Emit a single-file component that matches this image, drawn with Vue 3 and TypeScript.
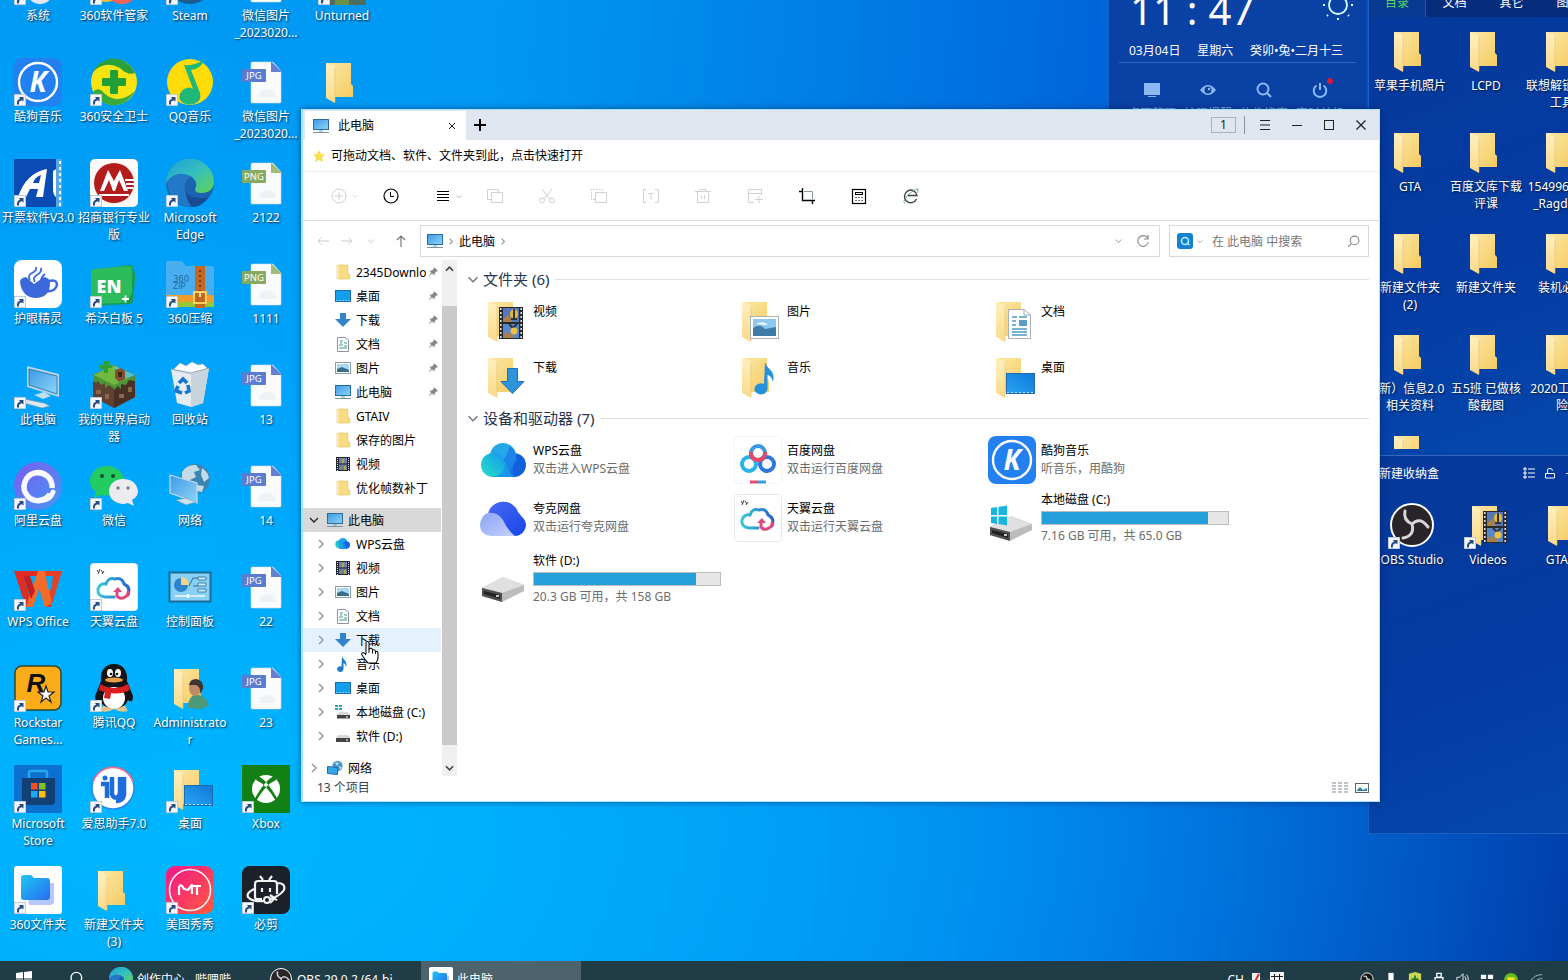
<script setup lang="ts">
import { ref } from 'vue'

interface DeskItem {
  icon: string
  lines: string[]
  shortcut?: boolean
}
interface TreeItem {
  icon: string
  label: string
  pinned?: boolean
  expandable?: boolean
  hovered?: boolean
}
interface Tile {
  icon: string
  title: string
  sub?: string
  used?: number
}

const d = (icon: string, lines: string, shortcut = false): DeskItem => ({
  icon,
  lines: lines.split('|'),
  shortcut,
})

const deskColumns: DeskItem[][] = [
  [
    d('system', '系统', true),
    d('kugou', '酷狗音乐', true),
    d('invoice', '开票软件V3.0', true),
    d('cup', '护眼精灵', true),
    d('thispc', '此电脑', true),
    d('aliyun', '阿里云盘', true),
    d('wps', 'WPS Office', true),
    d('rockstar', 'Rockstar|Games...', true),
    d('store', 'Microsoft|Store', true),
    d('folder360', '360文件夹', true),
  ],
  [
    d('soft360', '360软件管家', true),
    d('safe360', '360安全卫士', true),
    d('cmb', '招商银行专业|版', true),
    d('seewo', '希沃白板 5', true),
    d('minecraft', '我的世界启动|器', true),
    d('wechat', '微信', true),
    d('tianyi', '天翼云盘', true),
    d('qq', '腾讯QQ', true),
    d('aisi', '爱思助手7.0', true),
    d('folder', '新建文件夹|(3)'),
  ],
  [
    d('steam', 'Steam', true),
    d('qqmusic', 'QQ音乐', true),
    d('edge', 'Microsoft|Edge', true),
    d('zip360', '360压缩', true),
    d('recycle', '回收站'),
    d('network', '网络'),
    d('control', '控制面板'),
    d('admin', 'Administrato|r'),
    d('folder-desktop', '桌面', true),
    d('meitu', '美图秀秀', true),
  ],
  [
    d('jpg', '微信图片|_2023020...'),
    d('jpg', '微信图片|_2023020...'),
    d('png', '2122'),
    d('png', '1111'),
    d('jpg', '13'),
    d('jpg', '14'),
    d('jpg', '22'),
    d('jpg', '23'),
    d('xbox', 'Xbox', true),
    d('bijian', '必剪', true),
  ],
  [d('unturned', 'Unturned', true), d('folder', '')],
]

const boxFolders: DeskItem[] = [
  d('folder', '苹果手机照片'),
  d('folder', 'LCPD'),
  d('folder', '联想解锁刷机|工具'),
  d('folder', 'GTA'),
  d('folder', '百度文库下载|评课'),
  d('folder', '1549966012|_Ragdoll...'),
  d('folder', '新建文件夹|(2)'),
  d('folder', '新建文件夹'),
  d('folder', '装机必备'),
  d('folder', '(新）信息2.0|相关资料'),
  d('folder', '五5班 已做核|酸截图'),
  d('folder', '2020工伤保|险'),
  d('folder', ''),
]
const boxApps: DeskItem[] = [
  d('obs', 'OBS Studio', true),
  d('folder-video', 'Videos', true),
  d('folder', 'GTA IV'),
]

const quick: TreeItem[] = [
  { icon: 's-folder', label: '2345Downloads', pinned: true },
  { icon: 's-desktop', label: '桌面', pinned: true },
  { icon: 's-down', label: '下载', pinned: true },
  { icon: 's-doc', label: '文档', pinned: true },
  { icon: 's-pic', label: '图片', pinned: true },
  { icon: 's-pc', label: '此电脑', pinned: true },
  { icon: 's-folder', label: 'GTAIV' },
  { icon: 's-folder', label: '保存的图片' },
  { icon: 's-video', label: '视频' },
  { icon: 's-folder', label: '优化帧数补丁' },
]
const pcChildren: TreeItem[] = [
  { icon: 's-wps', label: 'WPS云盘' },
  { icon: 's-video', label: '视频' },
  { icon: 's-pic', label: '图片' },
  { icon: 's-doc', label: '文档' },
  { icon: 's-down', label: '下载', hovered: true },
  { icon: 's-music', label: '音乐' },
  { icon: 's-desktop', label: '桌面' },
  { icon: 's-diskc', label: '本地磁盘 (C:)' },
  { icon: 's-diskd', label: '软件 (D:)' },
]

const folders: Tile[] = [
  { icon: 'folder-video', title: '视频' },
  { icon: 'folder-pic', title: '图片' },
  { icon: 'folder-doc', title: '文档' },
  { icon: 'folder-down', title: '下载' },
  { icon: 'folder-music', title: '音乐' },
  { icon: 'folder-desktop', title: '桌面' },
]
const devices: Tile[] = [
  { icon: 'wpscloud', title: 'WPS云盘', sub: '双击进入WPS云盘' },
  { icon: 'baidu', title: '百度网盘', sub: '双击运行百度网盘' },
  { icon: 'kugou', title: '酷狗音乐', sub: '听音乐，用酷狗' },
  { icon: 'quark', title: '夸克网盘', sub: '双击运行夸克网盘' },
  { icon: 'tianyi', title: '天翼云盘', sub: '双击运行天翼云盘' },
  { icon: 'disk-c', title: '本地磁盘 (C:)', sub: '7.16 GB 可用，共 65.0 GB', used: 89 },
  { icon: 'disk-d', title: '软件 (D:)', sub: '20.3 GB 可用，共 158 GB', used: 87 },
]

const tools = [
  { icon: 't-new', name: '新建', off: true, more: true },
  { icon: 't-clock', name: '历史' },
  { icon: 't-list', name: '排列', more: true },
  { icon: 't-copy', name: '复制', off: true },
  { icon: 't-cut', name: '剪切', off: true },
  { icon: 't-paste', name: '粘贴', off: true },
  { icon: 't-rename', name: '重命名', off: true },
  { icon: 't-trash', name: '删除', off: true },
  { icon: 't-add', name: '添加', off: true },
  { icon: 't-crop', name: '截图' },
  { icon: 't-calc', name: '计算器' },
  { icon: 't-ie', name: '浏览器' },
]

const widgets = [
  { icon: 'w-screen', label: '桌面整理' },
  { icon: 'w-eye', label: '护眼提醒' },
  { icon: 'w-search', label: '软件搜索' },
  { icon: 'w-power', label: '定时关机' },
]
const boxTabs = ['目录', '文档', '其它', '图片']
const activeTab = ref('目录')
const keyword = ref('')
const tray = ['y-pen', 'y-grid', 'y-obs', 'y-usb', 'y-shield', 'y-lock', 'y-sound', 'y-win', 'y-green', 'y-wifi']
</script>

<template>
  <svg class="sprite" aria-hidden="true">
    <defs>
      <linearGradient id="gFolder" x1="0" y1="0" x2="1" y2="1"><stop offset="0" stop-color="#fce8a6" /><stop offset="1" stop-color="#f5cb62" /></linearGradient>
      <linearGradient id="gFlap" x1="0" y1="0" x2="0" y2="1"><stop offset="0" stop-color="#fff0c0" /><stop offset="1" stop-color="#fad98a" /></linearGradient>
      <linearGradient id="gScreen" x1="0" y1="0" x2="1" y2="1"><stop offset="0" stop-color="#3c9ae4" /><stop offset="1" stop-color="#8fd4fa" /></linearGradient>
      <linearGradient id="gDesk" x1="0" y1="1" x2="1" y2="0"><stop offset="0" stop-color="#28a6f4" /><stop offset="1" stop-color="#1077d8" /></linearGradient>
      <linearGradient id="gEdge" x1="0" y1="0" x2="1" y2="1"><stop offset="0" stop-color="#1d9fd8" /><stop offset=".5" stop-color="#35bfc0" /><stop offset="1" stop-color="#62d44e" /></linearGradient>
      <linearGradient id="gMeitu" x1="0" y1="0" x2="1" y2="1"><stop offset="0" stop-color="#f5168c" /><stop offset="1" stop-color="#ff5c3c" /></linearGradient>
      <linearGradient id="gAli" x1="0" y1="0" x2="1" y2="1"><stop offset="0" stop-color="#7c5cf0" /><stop offset="1" stop-color="#4598f2" /></linearGradient>
      <linearGradient id="gWps" x1="0" y1="1" x2="1" y2="0"><stop offset="0" stop-color="#26e0c4" /><stop offset="1" stop-color="#1298f0" /></linearGradient>
      <linearGradient id="gQuark" x1="0" y1="0" x2="1" y2="1"><stop offset="0" stop-color="#4a68f4" /><stop offset="1" stop-color="#1546e8" /></linearGradient>
      <linearGradient id="gQuark2" x1="0" y1="0" x2="1" y2="1"><stop offset="0" stop-color="#8ca4f8" /><stop offset="1" stop-color="#c4d0fc" /></linearGradient>
      <linearGradient id="gTy" x1="0" y1="0" x2="1" y2="0"><stop offset="0" stop-color="#38c8d8" /><stop offset="1" stop-color="#2a66c8" /></linearGradient>
      <linearGradient id="gF360" x1="0" y1="0" x2="1" y2="1"><stop offset="0" stop-color="#1cc8f0" /><stop offset="1" stop-color="#2a6cf4" /></linearGradient>

      <symbol id="arrow" viewBox="0 0 12 12"><rect width="12" height="12" fill="#f4f8fc" stroke="#8aa4bc" stroke-width="1" /><path d="M3 10.500C2.500 7 4 5 6.200 4.700L5 3H9.500V7.600L8 6.300C5.500 6.500 4.500 8 5 10.500Z" fill="#274a80" /></symbol>

      <symbol id="folder" viewBox="0 0 48 48"><path d="M8 5H33V26L35 28V39H14Z" fill="url(#gFolder)" /><path d="M8 5L16 8Q17 9 17 11V45L8 40Z" fill="url(#gFlap)" /><path d="M17 10V44" stroke="#e8c060" stroke-width=".6" /></symbol>
      <symbol id="filmstrip" viewBox="0 0 24 32"><rect width="24" height="32" fill="#26282e" /><rect x="4" y="1" width="16" height="14" fill="#5478b8" /><rect x="4" y="17" width="16" height="14" fill="#5888c8" /><path d="M4 12L9 8 13 12V15H4ZM4 28L8 25 14 28V31H4Z" fill="#a8804c" /><ellipse cx="15" cy="7" rx="4" ry="5" fill="#e8b830" /><path d="M15 2V12M12 12H18M10 17L14 21 18 17" stroke="#30343c" stroke-width="2" fill="none" /><circle cx="15" cy="24" r="3.500" fill="#f0c040" /><path d="M1.800 1V32M22.200 1V32" stroke="#d8dce4" stroke-width="1.600" stroke-dasharray="2 2" /></symbol>
      <symbol id="folder-video" viewBox="0 0 48 48"><use href="#folder" width="48" height="48" /><use href="#filmstrip" x="19" y="10" width="24" height="32" /></symbol>
      <symbol id="folder-pic" viewBox="0 0 48 48"><use href="#folder" width="48" height="48" /><rect x="16.500" y="19.500" width="28" height="22" fill="#fff" stroke="#a8b4bc" /><rect x="19" y="22" width="23" height="17" fill="#8cc8f0" /><path d="M19 31Q26 26 31 32L42 30V39H19Z" fill="#3d7ca8" /><path d="M22 27Q28 23 34 28Z" fill="#fff" /></symbol>
      <symbol id="folder-doc" viewBox="0 0 48 48"><use href="#folder" width="48" height="48" /><path d="M20.500 12.500H36L42.500 18V41.500H20.500Z" fill="#fff" stroke="#a8aeb4" /><path d="M36 12.500V18H42.500" fill="none" stroke="#a8aeb4" /><path d="M24 20H29M24 24H28M24 28H28M24 32H39M24 35H39M24 38H39M31 20H39" stroke="#4d98c4" stroke-width="1.400" /><rect x="31" y="23" width="8" height="6" fill="#5c9cc8" /></symbol>
      <symbol id="folder-down" viewBox="0 0 48 48"><use href="#folder" width="48" height="48" /><path d="M27.500 15.500H37.500V28.500H44L32.500 40.500 21 28.500H27.500Z" fill="#2f94dc" stroke="#1c72b8" /></symbol>
      <symbol id="folder-music" viewBox="0 0 48 48"><use href="#folder" width="48" height="48" /><path d="M31 9C33 17 42 17 39 29 38 24 35 22 33.500 22V36A6.500 5.500 0 1 1 30 31Z" fill="#2590dc" /></symbol>
      <symbol id="folder-desktop" viewBox="0 0 48 48"><use href="#folder" width="48" height="48" /><rect x="18.500" y="20.500" width="28" height="20" fill="url(#gDesk)" stroke="#1d6cae" /><path d="M19 39.500H46" stroke="#a8dcff" stroke-dasharray="2 2" /></symbol>
      <symbol id="admin" viewBox="0 0 48 48"><use href="#folder" width="48" height="48" /><path d="M21 43Q24 31 30 30 40 32 43 41Q34 48 21 43Z" fill="#4c9a7a" /><ellipse cx="29" cy="24" rx="6" ry="8" fill="#c08c68" /><path d="M23 21Q24 15 30 15 38 16 37 25L34 30Q35 23 30 21Z" fill="#3c3630" /></symbol>

      <symbol id="file" viewBox="0 0 48 48"><path d="M10 4Q9 4 9 6V44Q9 45 10 45H38Q39 45 39 44V13L31 4Z" fill="#fafbfd" stroke="#d4d8e4" stroke-width=".6" /><path d="M17 38Q17 32 23 32 28 28 32 34 35 36 33 39H18Z" fill="#eef1f6" /></symbol>
      <symbol id="jpg" viewBox="0 0 48 48"><use href="#file" width="48" height="48" /><path d="M29 3L40 14H29Z" fill="#6480d0" /><rect y="11" width="24" height="13" rx="1" fill="#5c7cd0" /><text x="12" y="21" text-anchor="middle" font-size="9.500" font-family="Noto Sans, sans-serif" fill="#fff">JPG</text></symbol>
      <symbol id="png" viewBox="0 0 48 48"><use href="#file" width="48" height="48" /><path d="M29 3L40 14H29Z" fill="#a0bc78" /><rect y="11" width="24" height="13" rx="1" fill="#88aa60" /><text x="12" y="21" text-anchor="middle" font-size="9.500" font-family="Noto Sans, sans-serif" fill="#fff">PNG</text></symbol>

      <symbol id="system" viewBox="0 0 48 48"><circle cx="26" cy="34" r="13" fill="#e4e8ec" /><circle cx="26" cy="34" r="6" fill="#88a4bc" /></symbol>
      <symbol id="soft360" viewBox="0 0 48 48"><circle cx="16" cy="30" r="15" fill="#fcc030" /><circle cx="32" cy="30" r="17" fill="#f8605c" /></symbol>
      <symbol id="steam" viewBox="0 0 48 48"><circle cx="24" cy="24" r="23" fill="#1a5c90" /></symbol>
      <symbol id="unturned" viewBox="0 0 48 48"><rect width="48" height="48" fill="#4c6c64" /><rect x="17" y="42" width="14" height="6" fill="#6c9048" /></symbol>

      <symbol id="kugou" viewBox="0 0 48 48"><rect width="48" height="48" rx="8" fill="#2380f0" /><circle cx="24" cy="24" r="19" fill="none" stroke="#fff" stroke-width="2.400" /><text x="24" y="34" text-anchor="middle" font-size="28" font-weight="700" font-style="italic" font-family="Noto Sans, sans-serif" fill="#fff">K</text></symbol>
      <symbol id="safe360" viewBox="0 0 48 48"><circle cx="24" cy="24" r="23" fill="#f8e410" /><path d="M3 14A23 23 0 0 1 45 15Q38 18 30 10 15 2 3 14Z" fill="#28a03c" /><path d="M3 34Q8 28 14 35 28 48 45 33 36 49 20 47 8 44 3 34Z" fill="#3caa38" /><path d="M21 13H27V21H35V27H27V35H21V27H13V21H21Z" fill="#22a038" stroke="#22a038" stroke-linejoin="round" stroke-width="2" /></symbol>
      <symbol id="qqmusic" viewBox="0 0 48 48"><circle cx="24" cy="24" r="23" fill="#ffdc08" /><path d="M18 7Q30 8 38 1 37 10 25 12L34 35Q36 43 28 46 19 48 14 42 12 35 18 31 24 28 27 31Z" fill="#20b878" /></symbol>
      <symbol id="invoice" viewBox="0 0 48 48"><rect width="48" height="48" fill="#0b4cb4" /><path d="M42 0H48V48H42Z" fill="#58a8e4" /><path d="M39 12Q42 10 42 10V38Q39 36 39 30Z" fill="#fff" /><path d="M46 2V48" stroke="#fff" stroke-width="2" stroke-dasharray="3 3" /><path d="M4 38Q12 14 33 10L29 38H22L24 30H16L12 38ZM19 24H25L27 16Q21 18 19 24Z" fill="#fff" fill-rule="evenodd" /></symbol>
      <symbol id="cmb" viewBox="0 0 48 48"><rect width="48" height="48" rx="5" fill="#fdf9f6" /><circle cx="24" cy="24" r="20" fill="#b41c1c" /><path d="M10 32L18 11 24 22 30 11 38 32H34L29 21 25 32H23L19 21 14 32Z" fill="#fff" /><path d="M9 36H39M35 21H44M36 25H44M37 29H43" stroke="#fff" stroke-width="2" /></symbol>
      <symbol id="edge" viewBox="0 0 48 48"><circle cx="24" cy="24" r="24" fill="#1b62b0" /><path d="M0 24A24 24 0 0 1 48 23Q47 34 35 34 29 34 29 30 32 25 28 20 18 10 0 24Z" fill="url(#gEdge)" /><path d="M1 22Q12 10 25 18 17 22 19 32 21 42 31 47 4 50 1 22Z" fill="#2478c8" /><path d="M20 33Q27 42 42 38 36 48 26 48 20 42 20 33Z" fill="#174c94" /></symbol>
      <symbol id="cup" viewBox="0 0 48 48"><rect width="48" height="48" rx="8" fill="#fff" /><path d="M6 22Q6 18 12 17L20 24 30 17Q36 18 36 23 36 38 21 38 8 37 6 22Z" fill="#3c68dc" /><path d="M35 21Q43 19 43 25 41 32 33 31" fill="none" stroke="#3c68dc" stroke-width="2.500" /><path d="M16 20Q13 16 18 13 23 11 22 7M21 22Q18 18 23 15 28 12 27 8M27 21Q27 17 31 14" fill="none" stroke="#3c68dc" stroke-width="1.800" /></symbol>
      <symbol id="seewo" viewBox="0 0 48 48"><path d="M2 10L40 5Q43 5 43 8L45 14Q46 17 45 20L43 40Q43 44 39 44L4 46Z" fill="#189c50" /><path d="M1 12Q1 9 4 9L39 6Q42 6 42 9V32Q39 42 30 43L4 44Q1 44 1 41Z" fill="#2cbc5c" /><text x="19" y="33" text-anchor="middle" font-size="18" font-weight="800" font-family="Open Sans, Noto Sans, sans-serif" fill="#fff">EN</text><path d="M32 39H39M35.500 35.500V42.500" stroke="#fff" stroke-width="1.800" /></symbol>
      <symbol id="zip360" viewBox="0 0 48 48"><path d="M0 3Q0 1 2 1H16L20 6H46Q48 6 48 8V36H0Z" fill="#48aef0" /><rect x="12" y="35" width="36" height="12" fill="#98c838" /><rect y="35" width="48" height="7" fill="#f09c28" /><rect x="29" y="6" width="10" height="42" fill="#c46820" /><path d="M34 10V32" stroke="#7c3810" stroke-width="2" stroke-dasharray="2 3" /><rect x="28" y="32" width="12" height="11" fill="none" stroke="#ffd060" stroke-width="2" /><path d="M34 31V37" stroke="#ffe090" stroke-width="2" /><text x="15" y="22" text-anchor="middle" font-size="8.500" font-family="DejaVu Sans, sans-serif" fill="#1d68a8">360</text><text x="13" y="29" text-anchor="middle" font-size="8" font-family="DejaVu Sans, sans-serif" fill="#1d68a8">ZIP</text></symbol>
      <symbol id="thispc" viewBox="0 0 48 48"><path d="M13 5L45 13V36L13 26Z" fill="#b8d4e8" /><path d="M15 8L43 15V33L15 24Z" fill="url(#gScreen)" stroke="#1c6ca8" stroke-width=".8" /><path d="M20 34L30 31 37 35 29 38Z" fill="#c4dcec" /><path d="M10 38L30 42 36 45 28 47 6 41Z" fill="#dce8f0" stroke="#7898b0" stroke-width=".7" /></symbol>
      <symbol id="minecraft" viewBox="0 0 48 48"><path d="M3 14L24 4 45 14V36L24 47 3 36Z" fill="#604030" /><path d="M24 24L45 14V36L24 47Z" fill="#483024" /><path d="M3 14L24 4 45 14 24 25Z" fill="#70b840" /><path d="M24 5L45 14 38 17 26 11Z" fill="#58c0d0" /><path d="M3 14V20L7 22V19L11 24 15 22V27L19 24 24 28V24ZM24 24V29L28 25 31 28V23L36 24 39 19 45 20V14Z" fill="#4e9438" /><path d="M25 9L31 7 35 10V18L29 21 25 17Z" fill="#805030" /><rect x="28" y="11" width="4" height="5" fill="#442418" /><path d="M14 0H19V4H22V7H18V12H14V8H10V4H14Z" fill="#2ca030" /><path d="M6 29H11V33H6ZM15 33H19V38H15ZM29 33H34V37H29ZM38 26H42V31H38Z" fill="#88684c" /></symbol>
      <symbol id="recycle" viewBox="0 0 48 48"><path d="M5 8L43 7 37 42 25 46 11 42Z" fill="#e4ecf2" /><path d="M25 11L43 7 37 42 25 46Z" fill="#c8d4dc" /><path d="M7 9L14 2 20 5 26 1 32 4 37 3 42 8 25 13Z" fill="#fcfdfe" stroke="#b8c4cc" stroke-width=".6" /><path d="M5 8L25 12 43 7" fill="none" stroke="#8ca4b4" /><path d="M13 22L17 18 21 22M22 24L23 30 19 32M16 32L10 30 12 25" fill="none" stroke="#1676d0" stroke-width="3.600" /></symbol>
      <symbol id="aliyun" viewBox="0 0 48 48"><circle cx="24" cy="24" r="24" fill="url(#gAli)" /><path d="M36 32A14 14 0 1 1 38 26" fill="none" stroke="#f8faff" stroke-width="5.500" /><path d="M26 38Q36 39 39 30" fill="none" stroke="#f8faff" stroke-width="5" stroke-linecap="round" /></symbol>
      <symbol id="wechat" viewBox="0 0 48 48"><path d="M17 4C8 4 0 10 0 19 0 24 3 28 6 30L4 36 11 33Q15 34 20 33 35 30 34 18 32 5 17 4Z" fill="#22cc60" /><path d="M33 17C25 17 19 22 19 29.500S26 42 34 42L38 41 44 44 42 38Q48 35 48 29 46 17 33 17Z" fill="#ececf0" /><circle cx="12" cy="14" r="2" fill="#14502c" /><circle cx="23" cy="14" r="2" fill="#14502c" /><circle cx="28" cy="26" r="1.800" fill="#808488" /><circle cx="38" cy="26" r="1.800" fill="#808488" /></symbol>
      <symbol id="network" viewBox="0 0 48 48"><circle cx="29" cy="17" r="15" fill="#3c84b4" /><path d="M16 10Q21 2 30 3L34 8 28 10 30 15 22 19 16 16ZM36 6Q42 10 43 16L38 20 35 13ZM30 23L38 24 36 30 31 29Z" fill="#c4dce8" /><path d="M4 13L31 21V41L4 31Z" fill="url(#gScreen)" stroke="#c0dcec" stroke-width="1.200" /><path d="M10 38L20 36 30 40 20 43Z" fill="#ccdfec" stroke="#6c94b0" stroke-width=".6" /></symbol>
      <symbol id="wps" viewBox="0 0 48 48"><path d="M0 8H26V13H9L19 44H12Z" fill="#e02c24" /><path d="M30 8H48L37 44H31L38 22 39 13H32Z" fill="#e84024" /><path d="M24 8H31L33 20 38 40 31 44 25 26 19 44H12L15 34Z" fill="#f46c2c" /><path d="M9 13H16L21 28 17 36Z" fill="#c42020" /></symbol>
      <symbol id="tianyi" viewBox="0 0 48 48"><rect x=".5" y=".5" width="47" height="47" rx="3" fill="#fff" stroke="#e4e8ee" /><path d="M24 34H15Q7 33 8 26 10 20 16 21 18 14 25 16 32 14 34 21 41 24 38 32" fill="none" stroke="url(#gTy)" stroke-width="3" stroke-linecap="round" /><path d="M27 28V33Q30 37 35 34 39 32 38 28" fill="none" stroke="#e0487c" stroke-width="3" /><path d="M23 29L28 24 32 29Z" fill="#e0487c" /><path d="M7 7L9 10M10 6L8 11M11 7L13 10M12 11L14 8" stroke="#444" /></symbol>
      <symbol id="control" viewBox="0 0 48 48"><rect x="3.500" y="9.500" width="41" height="29" fill="#88d0f4" stroke="#1c6c98" stroke-width="2" /><circle cx="15" cy="22" r="7" fill="#2c84cc" /><path d="M15 22V14A8 8 0 0 1 23 22Z" fill="#f4d488" /><path d="M23 23L27 15H32M27 23H32" fill="none" stroke="#286c94" /><path d="M32 14H40V17H32ZM32 20H40V23H32ZM32 26H40V29H32Z" fill="#c8ecfc" stroke="#286c94" stroke-width=".8" /><path d="M9 33H20M25 33H39" stroke="#f4f8fa" stroke-width="1.500" /><circle cx="22" cy="33" r="2" fill="#fff" /></symbol>
      <symbol id="rockstar" viewBox="0 0 48 48"><rect x="1" y="2" width="46" height="44" rx="7" fill="#fcac18" stroke="#30482c" stroke-width="1.500" /><text x="22" y="28" text-anchor="middle" font-size="26" font-weight="900" font-style="italic" font-family="Liberation Sans, Noto Sans, sans-serif" fill="#111">R</text><path d="M32 22L34 28H40L35 32 37 38 32 34 27 38 29 32 24 28H30Z" fill="#fff" stroke="#222" stroke-width="1.200" /></symbol>
      <symbol id="qq" viewBox="0 0 48 48"><path d="M13 42H35L38 47Q30 49 24 45 18 49 10 47Z" fill="#e0c48c" /><path d="M24 0C14 0 10 8 11 17L5 32Q5 40 10 36 13 44 24 45 35 44 38 36 43 40 43 32L37 17C38 8 34 0 24 0Z" fill="#141418" /><ellipse cx="24" cy="34" rx="11" ry="11" fill="#fff" /><ellipse cx="20" cy="9" rx="3" ry="4" fill="#fff" /><ellipse cx="28" cy="9" rx="3" ry="4" fill="#fff" /><circle cx="21" cy="10" r="1.300" fill="#111" /><circle cx="27" cy="10" r="1.300" fill="#111" /><ellipse cx="24" cy="16" rx="9" ry="2.500" fill="#e8a048" /><path d="M10 20Q24 28 38 20L40 26Q30 31 21 29L20 35 14 34 15 28 9 26Z" fill="#dc2020" /></symbol>
      <symbol id="store" viewBox="0 0 48 48"><rect width="48" height="48" fill="#0c70d0" /><path d="M15 13V8Q15 6 17 6H31Q33 6 33 8V13" fill="none" stroke="#28a8ec" stroke-width="2.500" /><path d="M8 13H41V36Q41 40 37 40H12Q8 40 8 36Z" fill="#124074" /><rect x="17" y="18" width="6.500" height="6.500" fill="#f05024" /><rect x="25" y="18" width="6.500" height="6.500" fill="#80c020" /><rect x="17" y="26" width="6.500" height="6.500" fill="#20a8f0" /><rect x="25" y="26" width="6.500" height="6.500" fill="#fcbc10" /></symbol>
      <symbol id="aisi" viewBox="0 0 48 48"><circle cx="23" cy="23" r="21" fill="#fff" stroke="#2c88e8" stroke-width="1.500" /><path d="M3 17A21 21 0 0 1 43 17" fill="none" stroke="#e87090" stroke-width="1.600" /><circle cx="15" cy="13" r="2.500" fill="#1c6cdc" /><path d="M11 19H17V33M22 12V29Q23 34 28 32 30 30 30 27V12M34 12V30Q33 36 26 36" fill="none" stroke="#1c6cdc" stroke-width="4.500" /></symbol>
      <symbol id="xbox" viewBox="0 0 48 48"><rect width="48" height="48" fill="#128014" /><circle cx="24" cy="24" r="14" fill="#fff" /><path d="M15 11Q24 13 36 35 37 37 34 36 24 19 14 15ZM33 11Q24 13 12 35 11 37 14 36 24 19 34 15Z" fill="#128014" /></symbol>
      <symbol id="folder360" viewBox="0 0 48 48"><rect width="48" height="48" rx="3" fill="#fff" /><path d="M12 17H40V36Q40 39 36 39H15Z" fill="#b8c8fc" /><path d="M7 12Q7 9 10 9H17L20 12H33Q36 12 36 15V31Q36 34 33 34H10Q7 34 7 31Z" fill="url(#gF360)" /></symbol>
      <symbol id="meitu" viewBox="0 0 48 48"><rect width="48" height="48" rx="9" fill="url(#gMeitu)" /><circle cx="24" cy="24" r="20.500" fill="none" stroke="#fff" stroke-width="1.500" /><path d="M13 29V21Q15 17 18 23L22 24 26 19V28M26 20H35M31 20V29" fill="none" stroke="#fff" stroke-width="2.200" stroke-linejoin="round" /></symbol>
      <symbol id="bijian" viewBox="0 0 48 48"><rect width="48" height="48" rx="8" fill="#1c2028" /><path d="M20 33H15Q13 33 13 31V18Q13 15 16 15H32Q35 15 35 18V28M18 10L21 14M30 10L27 14M20 22V26M28 22V26M35 17Q44 17 42 24 38 30 28 33M12 23Q4 27 6 31 10 36 22 35M28 29L35 34M28 37L34 31" fill="none" stroke="#f0f2f4" stroke-width="2.200" /><circle cx="25" cy="34" r="3" fill="#1c2028" stroke="#f0f2f4" stroke-width="2" /></symbol>
      <symbol id="obs" viewBox="0 0 48 48"><circle cx="24" cy="24" r="21" fill="#282428" stroke="#fff" stroke-width="2" /><path d="M24 23Q15 19 17 10M24 23Q32 15 40 26M24 23Q27 35 15 37" fill="none" stroke="#d8d4d8" stroke-width="3" stroke-linecap="round" /></symbol>

      <symbol id="cloudshape" viewBox="0 0 48 40"><circle cx="24" cy="15" r="13" fill="#20a0e8" /><circle cx="34" cy="23" r="11" fill="#1068e0" /><path d="M12 34H36L30 20 15 10Z" fill="#1478e8" /><circle cx="13" cy="21" r="12" fill="url(#gWps)" /><path d="M12 9Q20 10 24 18 28 30 34 34H12Z" fill="#1c98e8" opacity=".7" /></symbol>
      <symbol id="wpscloud" viewBox="0 0 48 48"><circle cx="34" cy="29" r="12" fill="#1060dc" /><circle cx="23" cy="20" r="13" fill="#26a8e8" /><path d="M14 41H34L33 28 24 22Z" fill="#1470e4" /><path d="M30 10Q37 15 36 24L30 36 22 30Z" fill="#1a84e8" /><circle cx="13" cy="29" r="12" fill="url(#gWps)" /><path d="M13 17Q22 18 25 26 28 36 34 41H13Q24 38 25 29 20 20 10 17Z" fill="#1ca0e8" opacity=".8" /></symbol>
      <symbol id="quark" viewBox="0 0 48 48"><path d="M8 20A15.500 15 0 0 1 38 18Q41 22 44 25 48 31 44 37 41 42 34 42H26L8 28Z" fill="url(#gQuark)" /><path d="M8 19Q17 17 23 26 28 37 35 42H11Q0 41 0 31 1 21 8 19Z" fill="url(#gQuark2)" /></symbol>
      <symbol id="baidu" viewBox="0 0 48 48"><rect x=".5" y=".5" width="47" height="47" rx="3" fill="#fff" stroke="#f4f4f6" /><circle cx="15" cy="28" r="7" fill="none" stroke="#28b4e8" stroke-width="4" /><circle cx="33" cy="28" r="7" fill="none" stroke="#2c78dc" stroke-width="4" /><circle cx="24" cy="17" r="7" fill="none" stroke="#3898e0" stroke-width="4" /><path d="M17 16V18Q18 24 24 24 30 24 31 18V16" fill="none" stroke="#e84868" stroke-width="4" /><path d="M16 46H24" stroke="#e84868" stroke-width="3" /><path d="M24 46H32" stroke="#38a0e0" stroke-width="3" /></symbol>
      <symbol id="disk-d" viewBox="0 0 48 48"><path d="M2 33L23 22 44 30V36L22 47 2 41Z" fill="#bcbcbc" /><path d="M2 33L23 22 44 30 22 38Z" fill="#e0e0e0" /><path d="M2 33L22 38V47L2 41Z" fill="#505050" /><path d="M4 36L20 40V44L4 39Z" fill="#222" /><path d="M16 41H19" stroke="#fff" stroke-width="1.500" /></symbol>
      <symbol id="disk-c" viewBox="0 0 48 48"><use href="#disk-d" width="48" height="48" /><path d="M3 14L9 13V21H3ZM10.500 13L19 11.500V21H10.500ZM3 22.500H9V30L3 29ZM10.500 22.500H19V31.500L10.500 30Z" fill="#16b4e0" /></symbol>

      <symbol id="s-folder" viewBox="0 0 16 16"><path d="M2 1H13V10H15V15H2Z" fill="#f8dc84" stroke="#e4c060" stroke-width=".6" /><path d="M3 1V15" stroke="#fff0b8" stroke-width="1.500" /></symbol>
      <symbol id="s-desktop" viewBox="0 0 16 16"><rect x=".5" y="2.500" width="15" height="11" fill="#12a0ec" stroke="#1c6ca8" /><path d="M1 12.500H15" stroke="#70ccff" stroke-dasharray="2 1" /></symbol>
      <symbol id="s-down" viewBox="0 0 16 16"><path d="M5 1H11V7H16L8 15 0 7H5Z" fill="#3484cc" /></symbol>
      <symbol id="s-doc" viewBox="0 0 16 16"><path d="M2.500 1.500H10L13.500 4V15.500H2.500Z" fill="#fff" stroke="#8c949c" /><path d="M5 5H8M5 7H7M9 7H12M4 9H8M9 10H12M4 12H12" stroke="#48988c" /></symbol>
      <symbol id="s-pic" viewBox="0 0 16 16"><rect x=".5" y="2.500" width="15" height="11" fill="#fff" stroke="#8c9ca8" /><rect x="2" y="4" width="12" height="8" fill="#a8d8f4" /><path d="M2 9L7 7 14 10V12H2Z" fill="#386c88" /></symbol>
      <symbol id="s-pc" viewBox="0 0 16 16"><rect x=".5" y="1.500" width="15" height="10" fill="url(#gScreen)" stroke="#286ca0" /><path d="M6 13H10" stroke="#60a0c8" /><path d="M0 14.500H16" stroke="#7c94a4" /></symbol>
      <symbol id="s-video" viewBox="0 0 16 16"><rect x="1" y="1" width="14" height="14" fill="#23252c" /><rect x="4" y="2" width="8" height="5.500" fill="#6884a8" /><rect x="4" y="8.500" width="8" height="5.500" fill="#68809c" /><path d="M8 3V7M10 10V14" stroke="#c8a038" stroke-width="2" /><path d="M2.500 2V15M13.500 2V15" stroke="#dde" stroke-dasharray="1 1" /></symbol>
      <symbol id="s-wps" viewBox="0 0 48 40"><use href="#cloudshape" width="48" height="40" /></symbol>
      <symbol id="s-music" viewBox="0 0 16 16"><path d="M7 0C8 4 13 5 11 11 10.500 8 9 7 8.500 7V13A3.200 2.800 0 1 1 6.500 10.500Z" fill="#1c7cd0" /></symbol>
      <symbol id="s-diskd" viewBox="0 0 16 16"><path d="M1 10L3 7H13L15 10Z" fill="#d8d8d8" /><rect x="1" y="10" width="14" height="4" fill="#444" /><path d="M11 12H13" stroke="#fff" /></symbol>
      <symbol id="s-diskc" viewBox="0 0 16 16"><path d="M2 11L4 8H13L15 11Z" fill="#d8d8d8" /><rect x="2" y="11" width="13" height="3.500" fill="#444" /><path d="M11 13H13" stroke="#fff" /><path d="M0 1H3V3H0ZM4 1H7V3H4ZM0 4H3V6H0ZM4 4H7V6H4Z" fill="#24a8b4" /></symbol>
      <symbol id="s-net" viewBox="0 0 16 16"><circle cx="10.500" cy="6" r="5.200" fill="#4898c8" /><path d="M8 2L12 3 10 6ZM12 6L15 7 13 10Z" fill="#bce0ec" /><path d="M.5 6.500L10.500 7.500V14.500L.5 13.500Z" fill="#34a8e4" stroke="#1c70a8" /></symbol>

      <symbol id="pin" viewBox="0 0 12 12"><path d="M7 1L11 5 9.500 5.500 7.500 7.500 7.500 9.500 5 7.500 1 11 4 6.700 2.500 4.500 5 4.500 6.700 2.500Z" fill="#848a90" /></symbol>
      <symbol id="chev-r" viewBox="0 0 8 10"><path d="M2 1L6 5 2 9" fill="none" stroke="currentColor" stroke-width="1.500" /></symbol>
      <symbol id="chev-d" viewBox="0 0 10 8"><path d="M1 2L5 6 9 2" fill="none" stroke="currentColor" stroke-width="1.300" /></symbol>
      <symbol id="chev-u" viewBox="0 0 10 8"><path d="M1 6L5 2 9 6" fill="none" stroke="currentColor" stroke-width="1.800" /></symbol>
      <symbol id="star" viewBox="0 0 14 14"><path d="M7 1L9 5 13 5.500 10 8.500 11 13 7 11 3 13 4 8.500 1 5.500 5 5Z" fill="#f4e04c" /></symbol>
      <symbol id="x" viewBox="0 0 12 12"><path d="M1.500 1.500L10.500 10.500M10.500 1.500L1.500 10.500" stroke="currentColor" stroke-width="1.300" /></symbol>
      <symbol id="plus" viewBox="0 0 12 12"><path d="M0 6H12M6 0V12" stroke="currentColor" stroke-width="2" /></symbol>
      <symbol id="menu" viewBox="0 0 12 12"><path d="M1 1.500H11M1 6H11M1 10.500H11" stroke="currentColor" /></symbol>
      <symbol id="min" viewBox="0 0 12 12"><path d="M1 6.500H11" stroke="currentColor" /></symbol>
      <symbol id="max" viewBox="0 0 12 12"><rect x="1.500" y="1.500" width="9" height="9" fill="none" stroke="currentColor" /></symbol>
      <symbol id="left" viewBox="0 0 12 12"><path d="M1 6H12M4.500 2.500L1 6 4.500 9.500" fill="none" stroke="currentColor" /></symbol>
      <symbol id="right" viewBox="0 0 12 12"><path d="M0 6H11M7.500 2.500L11 6 7.500 9.500" fill="none" stroke="currentColor" /></symbol>
      <symbol id="up" viewBox="0 0 12 12"><path d="M6 12V1M2 5L6 1 10 5" fill="none" stroke="currentColor" stroke-width="1.200" /></symbol>
      <symbol id="reload" viewBox="0 0 14 14"><path d="M11.500 4A5.300 5.300 0 1 0 12.300 8M12 1V5H8" fill="none" stroke="currentColor" stroke-width="1.200" /></symbol>
      <symbol id="glass" viewBox="0 0 12 12"><circle cx="7" cy="5" r="4" fill="none" stroke="currentColor" /><path d="M4 8L1 11" stroke="currentColor" /></symbol>
      <symbol id="qsearch" viewBox="0 0 16 16"><rect width="16" height="16" rx="3" fill="#1680d0" /><circle cx="8" cy="8" r="3.500" fill="none" stroke="#aef0ff" stroke-width="1.600" /><path d="M10 10L12.500 12" stroke="#aef0ff" stroke-width="1.600" /></symbol>

      <symbol id="t-new" viewBox="0 0 18 18"><circle cx="9" cy="9" r="7" fill="none" stroke="currentColor" /><path d="M5 9H13M9 5V13" stroke="currentColor" /></symbol>
      <symbol id="t-clock" viewBox="0 0 18 18"><circle cx="9" cy="9" r="7" fill="none" stroke="currentColor" stroke-width="1.200" /><path d="M8.500 5V9.500H12" fill="none" stroke="currentColor" /></symbol>
      <symbol id="t-list" viewBox="0 0 18 18"><path d="M3 4.500H15M3 7.500H15M3 10.500H15M3 13.500H15" stroke="currentColor" stroke-width="1.200" /></symbol>
      <symbol id="t-copy" viewBox="0 0 18 18"><path d="M5 12.500H1.500V2.500H12.500V5.500M5.500 5.500H16.500V15.500H5.500Z" fill="none" stroke="currentColor" /></symbol>
      <symbol id="t-cut" viewBox="0 0 18 18"><path d="M4 2L12 12M14 2L6 12" stroke="currentColor" /><circle cx="4" cy="13.500" r="2.500" fill="none" stroke="currentColor" /><circle cx="14" cy="13.500" r="2.500" fill="none" stroke="currentColor" /></symbol>
      <symbol id="t-paste" viewBox="0 0 18 18"><path d="M5 12.500H1.500V2.500H12.500V5.500" fill="none" stroke="currentColor" stroke-dasharray="2 1" /><path d="M5.500 5.500H16.500V15.500H5.500Z" fill="none" stroke="currentColor" /></symbol>
      <symbol id="t-rename" viewBox="0 0 18 18"><path d="M4 2.500H1.500V15.500H4M13 2.500H16.500V15.500H13M6 6.500H12M9 6.500V13" fill="none" stroke="currentColor" /></symbol>
      <symbol id="t-trash" viewBox="0 0 18 18"><path d="M1 4.500H17M6 4V2.500H12V4M3.500 5V15.500H14.500V5M7.500 8V12M10.500 8V12" fill="none" stroke="currentColor" /></symbol>
      <symbol id="t-add" viewBox="0 0 18 18"><path d="M8 15.500H2.500V2.500H15.500V8M2.500 6.500H15.500M9 12.500H17M13 9V16" fill="none" stroke="currentColor" /></symbol>
      <symbol id="t-crop" viewBox="0 0 18 18"><path d="M4.500 1V13.500H17M14.500 13V17M1 4.500H4" fill="none" stroke="currentColor" stroke-width="1.400" /><path d="M6 4.500H14.500V12" fill="none" stroke="#889a98" /></symbol>
      <symbol id="t-calc" viewBox="0 0 18 18"><rect x="2.500" y="2.500" width="13" height="14" fill="none" stroke="currentColor" stroke-width="1.200" /><rect x="5.500" y="5.500" width="7" height="2" fill="none" stroke="currentColor" /><path d="M5 10.500H13M5 13.500H13" stroke="#778" stroke-dasharray="2 1" /></symbol>
      <symbol id="t-ie" viewBox="0 0 18 18"><path d="M14.500 12A6.300 6.300 0 1 1 15 8.500H5.500" fill="none" stroke="#384440" stroke-width="1.400" /><path d="M3 16Q0 16 5 9 12 2 16 2 17 4 14 7" fill="none" stroke="#80a090" /></symbol>

      <symbol id="w-screen" viewBox="0 0 18 18"><path d="M1 2H17V14H1ZM5 15H13V16H5Z" fill="currentColor" /></symbol>
      <symbol id="w-eye" viewBox="0 0 18 18"><path d="M1 9Q9-1 17 9 9 19 1 9Z" fill="currentColor" /><circle cx="9" cy="9" r="3.500" fill="#0b3fa0" /><circle cx="10" cy="8" r="1.300" fill="currentColor" /></symbol>
      <symbol id="w-search" viewBox="0 0 18 18"><circle cx="8" cy="8" r="5.500" fill="none" stroke="currentColor" stroke-width="2" /><path d="M12 12L16 16" stroke="currentColor" stroke-width="2.200" /></symbol>
      <symbol id="w-power" viewBox="0 0 18 18"><path d="M5.500 4.500A6.300 6.300 0 1 0 12.500 4.500M9 2V9" fill="none" stroke="currentColor" stroke-width="2" /></symbol>
      <symbol id="sun" viewBox="0 0 32 32"><circle cx="16" cy="16" r="9" fill="none" stroke="#dff" stroke-width="1.800" /><path d="M16 1V3M16 29V31M1 16H3M29 16H31M5 5L6 6M26 26L27 27M5 27L6 26M26 6L27 5" stroke="#dff" stroke-width="2" /></symbol>
      <symbol id="b-list" viewBox="0 0 12 12"><path d="M1 1H3V3H1ZM1 5H3V7H1ZM1 9H3V11H1Z" fill="none" stroke="#fff" /><path d="M5 2H12M5 6H12M5 10H12" stroke="#fff" /></symbol>
      <symbol id="b-lock" viewBox="0 0 12 12"><path d="M1.500 6.500H10.500V11H1.500ZM3.500 6V3Q3.500 1.500 6 1.500 8.500 1.500 8.500 3.500" fill="none" stroke="#fff" /></symbol>
      <symbol id="v-detail" viewBox="0 0 18 14"><path d="M1 2H5M1 5H5M1 8H5M1 11H5M7 2H11M7 5H11M7 8H11M7 11H11M13 2H17M13 5H17M13 8H17M13 11H17" stroke="#889" /></symbol>
      <symbol id="v-large" viewBox="0 0 14 14"><rect x=".5" y="2.500" width="13" height="9" fill="#fff" stroke="#567" /><path d="M2 9L5 6 8 9 12 7V10H2Z" fill="#357ca8" /></symbol>
      <symbol id="hand" viewBox="0 0 20 24"><path d="M6 14V3Q6 1.500 7.500 1.500T9 3V9Q12 7 12.500 10 15 9 15.500 11.500 18 11 18 13.500V17Q18 20 16 23H8Q5 20 2 15 1 13 3 12.500 5 13 6 15" fill="#fff" stroke="#111" stroke-width="1.100" /><path d="M9 9V13M12.500 10V13.500M15.500 11.500V14" stroke="#111" fill="none" /></symbol>

      <symbol id="y-pen" viewBox="0 0 14 16"><path d="M3 2H11V14H3Z" fill="#eee" /><path d="M4 14L10 3" stroke="#d03028" stroke-width="2" /></symbol>
      <symbol id="y-grid" viewBox="0 0 14 16"><path d="M0 1H14V16H0Z" fill="#f4f4f4" /><path d="M4.500 3V14M9.500 3V14M1 5.500H13M1 9.500H13" stroke="#222" /></symbol>
      <symbol id="y-obs" viewBox="0 0 16 16"><circle cx="8" cy="8" r="7" fill="#181818" stroke="#fff" /><path d="M4 5Q8 4 8 8 12 8 12 12" stroke="#ddd" fill="none" stroke-width="1.500" /></symbol>
      <symbol id="y-usb" viewBox="0 0 16 16"><path d="M5 1H11V15H5Z" fill="#fff" /></symbol>
      <symbol id="y-shield" viewBox="0 0 16 16"><path d="M1 2L8 0 15 2V12L8 16 1 12Z" fill="#c8d850" /><path d="M8 4V12M4 8H12" stroke="#287828" stroke-width="2" /></symbol>
      <symbol id="y-lock" viewBox="0 0 16 16"><path d="M5.500 1.500H10.500V6H5.500ZM3.500 6.500H12.500V16H3.500Z" fill="none" stroke="#fff" stroke-width="1.500" /></symbol>
      <symbol id="y-sound" viewBox="0 0 16 16"><path d="M1 6H4L8 2V14L4 10H1ZM10 5Q13 8 10 11M12 3Q16 8 12 13" fill="none" stroke="#fff" /></symbol>
      <symbol id="y-win" viewBox="0 0 16 16"><path d="M1 3H7V8H1ZM9 3H15V8H9ZM1 10H15V16H1Z" fill="#fff" /></symbol>
      <symbol id="y-green" viewBox="0 0 16 16"><circle cx="8" cy="9" r="8" fill="#68b820" /><path d="M4 8H12" stroke="#f8e020" stroke-width="4" /></symbol>
      <symbol id="y-wifi" viewBox="0 0 16 16"><path d="M1 10Q5 3 14 3M4 13Q7 8 14 7M8 15Q10 12 14 11" fill="none" stroke="#b8c4c8" /></symbol>
      <symbol id="winlogo" viewBox="0 0 16 16"><path d="M0 2L7 1V7.500H0ZM8 1L16 0V7.500H8ZM0 8.500H7V15L0 14ZM8 8.500H16V16L8 15Z" fill="#fff" /></symbol>
    </defs>
  </svg>

  <div class="desktop">
    <main class="icons" aria-label="桌面">
      <div v-for="(col, c) in deskColumns" :key="c" class="col">
        <button v-for="(it, i) in col" :key="i" type="button" class="item">
          <span class="pic">
            <svg width="48" height="48"><use :href="'#' + it.icon" /></svg>
            <svg v-if="it.shortcut" class="link" width="12" height="12"><use href="#arrow" /></svg>
          </span>
          <span v-for="l in it.lines" :key="l" class="line">{{ l }}</span>
        </button>
      </div>
    </main>

    <section class="clock">
      <div class="time"><span>11</span><span>:</span><span>47</span><svg class="sun" width="32" height="32"><use href="#sun" /></svg></div>
      <div class="date"><span>03月04日</span><span>星期六</span><span>癸卯•兔•二月十三</span></div>
      <div class="widgets">
        <button v-for="w in widgets" :key="w.icon" type="button">
          <span class="pic-w"><svg width="18" height="18"><use :href="'#' + w.icon" /></svg><i v-if="w.icon === 'w-power'" class="dot"></i></span>
          <span>{{ w.label }}</span>
        </button>
      </div>
    </section>

    <section class="boxes">
      <div class="box first">
        <nav class="tabs">
          <button v-for="t in boxTabs" :key="t" type="button" :class="{ on: t === activeTab }" @click="activeTab = t">{{ t }}</button>
        </nav>
        <div class="grid">
          <button v-for="(it, i) in boxFolders" :key="i" type="button" class="item">
            <span class="pic"><svg width="48" height="48"><use :href="'#' + it.icon" /></svg></span>
            <span v-for="l in it.lines" :key="l" class="line">{{ l }}</span>
          </button>
        </div>
      </div>
      <div class="box second">
        <header>
          <h2>新建收纳盒</h2>
          <svg width="12" height="12"><use href="#b-list" /></svg>
          <svg width="12" height="12"><use href="#b-lock" /></svg>
          <svg class="white" width="12" height="12"><use href="#min" /></svg>
        </header>
        <div class="grid apps">
          <button v-for="it in boxApps" :key="it.icon" type="button" class="item">
            <span class="pic">
              <svg width="48" height="48"><use :href="'#' + it.icon" /></svg>
              <svg v-if="it.shortcut" class="link" width="12" height="12"><use href="#arrow" /></svg>
            </span>
            <span v-for="l in it.lines" :key="l" class="line">{{ l }}</span>
          </button>
        </div>
      </div>
    </section>

    <section class="window" aria-label="此电脑">
      <header class="titlebar">
        <div class="tab">
          <svg width="16" height="16"><use href="#s-pc" /></svg>
          <span>此电脑</span>
          <button type="button" aria-label="关闭标签"><svg width="8" height="8"><use href="#x" /></svg></button>
        </div>
        <button type="button" class="newtab" aria-label="新标签"><svg width="12" height="12"><use href="#plus" /></svg></button>
        <div class="controls">
          <button type="button" class="count">1</button>
          <i class="sep"></i>
          <button v-for="b in ['menu', 'min', 'max', 'x']" :key="b" type="button" class="ctl" :aria-label="b"><svg width="12" height="12"><use :href="'#' + b" /></svg></button>
        </div>
      </header>

      <div class="favbar"><svg width="14" height="14"><use href="#star" /></svg><span>可拖动文档、软件、文件夹到此，点击快速打开</span></div>

      <div class="toolbar">
        <button v-for="t in tools" :key="t.icon" type="button" :class="{ off: t.off }" :disabled="t.off" :aria-label="t.name">
          <svg width="18" height="18"><use :href="'#' + t.icon" /></svg>
          <svg v-if="t.more" class="more" width="6" height="5"><use href="#chev-d" /></svg>
        </button>
      </div>

      <div class="address">
        <div class="nav">
          <button type="button" disabled aria-label="后退"><svg width="12" height="12"><use href="#left" /></svg></button>
          <button type="button" disabled aria-label="前进"><svg width="12" height="12"><use href="#right" /></svg></button>
          <button type="button" disabled aria-label="历史"><svg width="8" height="6"><use href="#chev-d" /></svg></button>
          <button type="button" class="go-up" aria-label="向上"><svg width="12" height="12"><use href="#up" /></svg></button>
        </div>
        <nav class="crumbs">
          <svg width="16" height="16"><use href="#s-pc" /></svg>
          <svg width="6" height="7"><use href="#chev-r" /></svg>
          <a href="#pc">此电脑</a>
          <svg width="6" height="7"><use href="#chev-r" /></svg>
          <span class="fill"></span>
          <button type="button" aria-label="展开"><svg width="7" height="6"><use href="#chev-d" /></svg></button>
          <button type="button" aria-label="刷新"><svg width="14" height="14"><use href="#reload" /></svg></button>
        </nav>
        <label class="search">
          <svg width="16" height="16"><use href="#qsearch" /></svg>
          <svg width="6" height="5"><use href="#chev-d" /></svg>
          <input v-model="keyword" type="text" placeholder="在 此电脑 中搜索" aria-label="搜索" />
          <svg width="13" height="13"><use href="#glass" /></svg>
        </label>
      </div>

      <div class="body">
        <div class="side">
          <ul class="tree">
            <li v-for="(q, i) in quick" :key="'q' + i">
              <button type="button" class="row sub">
                <svg width="16" height="16"><use :href="'#' + q.icon" /></svg><span class="name">{{ q.label }}</span>
                <svg v-if="q.pinned" class="pin" width="12" height="12"><use href="#pin" /></svg>
              </button>
            </li>
            <li class="spaced">
              <button type="button" class="row root sel">
                <svg class="tw dark" width="10" height="8"><use href="#chev-d" /></svg><svg width="16" height="16"><use href="#s-pc" /></svg><span class="name">此电脑</span>
              </button>
            </li>
            <li v-for="(p, i) in pcChildren" :key="'p' + i">
              <button type="button" class="row child" :class="{ hover: p.hovered }">
                <svg class="tw" width="8" height="10"><use href="#chev-r" /></svg><svg width="16" height="16"><use :href="'#' + p.icon" /></svg><span class="name">{{ p.label }}</span>
                <svg v-if="p.hovered" class="hand" width="20" height="24"><use href="#hand" /></svg>
              </button>
            </li>
            <li class="spaced">
              <button type="button" class="row root">
                <svg class="tw" width="8" height="10"><use href="#chev-r" /></svg><svg width="16" height="16"><use href="#s-net" /></svg><span class="name">网络</span>
              </button>
            </li>
          </ul>
          <div class="scroll">
            <button type="button" aria-label="向上滚动"><svg width="9" height="8"><use href="#chev-u" /></svg></button>
            <div class="track"><div class="thumb"></div></div>
            <button type="button" aria-label="向下滚动"><svg class="flip" width="9" height="8"><use href="#chev-u" /></svg></button>
          </div>
        </div>

        <div class="content">
          <h3><svg width="12" height="9"><use href="#chev-d" /></svg>文件夹 (6)<i></i></h3>
          <div class="tiles folders">
            <button v-for="f in folders" :key="f.icon" type="button" class="tile">
              <svg width="48" height="48"><use :href="'#' + f.icon" /></svg><span class="info"><b>{{ f.title }}</b></span>
            </button>
          </div>
          <h3><svg width="12" height="9"><use href="#chev-d" /></svg>设备和驱动器 (7)<i></i></h3>
          <div class="tiles devices">
            <button v-for="f in devices" :key="f.icon" type="button" class="tile">
              <svg width="48" height="48"><use :href="'#' + f.icon" /></svg>
              <span class="info">
                <b>{{ f.title }}</b>
                <span v-if="f.used" class="bar" role="img" :aria-label="'已用 ' + f.used + '%'"><span :style="{ width: f.used + '%' }"></span></span>
                <small>{{ f.sub }}</small>
              </span>
            </button>
          </div>
        </div>
      </div>

      <footer class="status"><span>13 个项目</span><svg width="18" height="14"><use href="#v-detail" /></svg><svg width="14" height="14"><use href="#v-large" /></svg></footer>
    </section>

    <footer class="taskbar">
      <button type="button" class="start" aria-label="开始"><svg width="16" height="16"><use href="#winlogo" /></svg></button>
      <button type="button" class="find" aria-label="搜索"><svg width="16" height="16"><use href="#glass" /></svg></button>
      <button type="button" class="task"><svg width="24" height="24"><use href="#edge" /></svg>创作中心 - 哔哩哔...</button>
      <button type="button" class="task"><svg width="24" height="24"><use href="#obs" /></svg>OBS 29.0.2 (64-bi...</button>
      <button type="button" class="task active"><svg width="24" height="24"><use href="#folder360" /></svg>此电脑</button>
      <span class="fill"></span>
      <span class="lang">CH</span>
      <svg v-for="t in tray" :key="t" :class="t" width="14" height="16"><use :href="'#' + t" /></svg>
    </footer>
  </div>
</template>

<style>
html,
body {
  overflow: hidden;
}
</style>

<style scoped>
.sprite {
  position: absolute;
  width: 0;
  height: 0;
}
.desktop {
  position: relative;
  height: 100vh;
  overflow: hidden;
  font: 12px/17px 'Noto Sans', 'Noto Sans CJK SC', sans-serif;
  color: #fff;
  background:
    radial-gradient(ellipse 90% 80% at 12% 85%, rgba(0, 184, 255, 0.95), rgba(0, 172, 255, 0.65) 50%, rgba(0, 150, 255, 0) 100%),
    linear-gradient(95deg, #009cf6 0%, #0098f2 30%, #0078e4 55%, #0060d8 70%, #0048bc 88%, #003ca8 100%);
}
button {
  padding: 0;
  border: 0;
  background: none;
  color: inherit;
  font: inherit;
  text-align: left;
}
svg {
  display: block;
  flex: none;
}
.fill {
  flex: 1;
}

.icons {
  display: flex;
  margin-top: -43px;
}
.col {
  width: 76px;
}
.item {
  display: flex;
  flex-direction: column;
  align-items: center;
  width: 76px;
  height: 101px;
  white-space: nowrap;
  text-shadow: 1px 1px 2px rgba(0, 20, 50, 0.9);
}
.pic {
  position: relative;
  margin-bottom: 2px;
  text-shadow: none;
}
.link {
  position: absolute;
  left: 0;
  bottom: 0;
}

.clock {
  position: absolute;
  top: -18px;
  right: 202px;
  width: 258px;
  height: 142px;
  box-sizing: border-box;
  padding: 0 10px;
  background: #0a41a4;
  border-left: 1px solid #1a62c8;
}
.time {
  display: flex;
  align-items: center;
  height: 56px;
  padding-left: 11px;
  font-size: 40px;
  line-height: 56px;
}
.time span + span {
  margin-left: 11px;
}
.sun {
  margin: -10px 2px 0 auto;
}
.date {
  display: flex;
  justify-content: space-between;
  padding: 4px 13px 3px 10px;
  border-bottom: 1px solid #2a66c0;
}
.widgets {
  display: flex;
  padding: 18px 5px 0;
  color: #8cb8f4;
}
.widgets button {
  display: flex;
  flex-direction: column;
  align-items: center;
  width: 56px;
  gap: 6px;
}
.pic-w {
  position: relative;
}
.dot {
  position: absolute;
  right: -4px;
  top: -3px;
  width: 6px;
  height: 6px;
  border-radius: 3px;
  background: #d81c38;
}

.boxes {
  position: absolute;
  top: -12px;
  right: 0;
  width: 200px;
}
.box {
  overflow: hidden;
  box-sizing: border-box;
  border-left: 1px solid #1c60c4;
  background: linear-gradient(160deg, #06389a, #043ca4 60%, #0448ac);
}
.first {
  height: 468px;
  padding-bottom: 6px;
  display: flex;
  flex-direction: column;
  border-bottom: 1px solid #3468c0;
}
.tabs {
  display: flex;
  flex: none;
  background: #062c7c;
}
.tabs button {
  flex: none;
  width: 57px;
  height: 29px;
  text-align: center;
}
.tabs .on {
  color: #50dc60;
  background: #083890;
  border-right: 1px solid #2058b0;
}
.grid {
  display: grid;
  grid-template-columns: repeat(3, 76px);
  min-height: 0;
  padding: 10px 0 0 3px;
  overflow: hidden;
}
.second {
  height: 378px;
  border-bottom: 1px solid #1c60c4;
}
.second header {
  display: flex;
  align-items: center;
  gap: 9px;
  height: 34px;
  padding-left: 10px;
}
.second h2 {
  margin: 0 auto 0 0;
  font: inherit;
}
.second .white {
  margin-right: -9px;
}
.apps {
  padding: 11px 0 0 5px;
}

.window {
  position: absolute;
  left: 301px;
  right: 188px;
  top: 109px;
  bottom: 178px;
  box-sizing: border-box;
  display: flex;
  flex-direction: column;
  border: 1px solid #a8e4fc;
  border-left-width: 2px;
  background: #fff;
  color: #000;
  box-shadow: 0 0 6px rgba(0, 30, 80, 0.6);
}
.titlebar {
  display: flex;
  flex: none;
  height: 30px;
  background: #dfe6f0;
}
.tab {
  display: flex;
  align-items: center;
  width: 161px;
  box-sizing: border-box;
  margin: 1px 0 0 2px;
  padding: 0 10px 0 8px;
  background: #fff;
}
.tab span {
  flex: 1;
  margin-left: 9px;
}
.newtab {
  width: 28px;
  display: grid;
  place-items: center;
}
.controls {
  display: flex;
  align-items: center;
  margin-left: auto;
  padding-right: 2px;
  color: #222;
}
.count {
  width: 25px;
  height: 16px;
  line-height: 14px;
  box-sizing: border-box;
  text-align: center;
  border: 1px solid #aab2bc;
}
.sep {
  width: 1px;
  height: 18px;
  margin: 0 4px 0 8px;
  background: #8a929c;
}
.ctl {
  width: 32px;
  height: 30px;
  display: grid;
  place-items: center;
}
.favbar {
  display: flex;
  flex: none;
  align-items: center;
  gap: 5px;
  height: 31px;
  padding-left: 9px;
  border-bottom: 1px solid #eeeeee;
}
.toolbar {
  display: flex;
  flex: none;
  height: 48px;
  padding-left: 10px;
  border-bottom: 1px solid #dcdcdc;
}
.toolbar button {
  display: flex;
  align-items: center;
  width: 52px;
  padding-left: 17px;
  box-sizing: border-box;
}
.toolbar .off {
  color: #d0d0d0;
}
.more {
  margin-left: 4px;
  color: #999;
}
.off .more {
  color: #d0d0d0;
}
.address {
  display: flex;
  flex: none;
  height: 32px;
  margin: 4px 10px 0 8px;
}
.nav {
  display: flex;
  align-items: center;
  width: 109px;
}
.nav button {
  width: 24px;
  height: 24px;
  display: grid;
  place-items: center;
  color: #cccccc;
}
.nav .go-up {
  width: 36px;
  color: #777;
}
.crumbs,
.search {
  display: flex;
  align-items: center;
  box-sizing: border-box;
  border: 1px solid #d9d9d9;
  padding: 0 6px;
}
.crumbs {
  flex: 1;
  gap: 5px;
  color: #888;
}
.crumbs a {
  color: #000;
  text-decoration: none;
}
.crumbs button {
  width: 20px;
  height: 20px;
  display: grid;
  place-items: center;
}
.search {
  width: 200px;
  margin-left: 9px;
  gap: 4px;
  padding: 0 8px 0 7px;
  color: #888;
}
.search input {
  flex: 1;
  min-width: 0;
  margin-left: 5px;
  padding: 0;
  border: 0;
  outline: 0;
  background: none;
  font: inherit;
}
.search input::placeholder {
  color: #777;
  opacity: 1;
}
.body {
  display: flex;
  flex: 1;
  min-height: 0;
  padding-top: 3px;
}
.side {
  display: flex;
  flex: none;
  width: 154px;
}
.tree {
  flex: 1;
  min-width: 0;
  margin: 0;
  padding: 0;
  list-style: none;
}
.spaced {
  margin-top: 8px;
}
.row {
  position: relative;
  display: flex;
  align-items: center;
  width: 138px;
  height: 24px;
  white-space: nowrap;
}
.name {
  margin-left: 5px;
  overflow: hidden;
}
.sub {
  padding-left: 32px;
  box-sizing: border-box;
}
.sub .name {
  flex: 1;
}
.pin {
  margin: 0 2px 0 1px;
}
.tw {
  color: #999;
}
.tw.dark {
  color: #222;
}
.root {
  padding-left: 6px;
  box-sizing: border-box;
}
.root .tw {
  width: 10px;
  margin-right: 8px;
}
.child {
  padding-left: 14px;
  box-sizing: border-box;
}
.child .tw {
  margin-right: 10px;
}
.sel {
  background: #d9d9d9;
}
.hover {
  background: #e5f2fd;
}
.hand {
  position: absolute;
  left: 57px;
  top: 12px;
  z-index: 2;
}
.scroll {
  display: flex;
  flex-direction: column;
  width: 15px;
  margin-bottom: 3px;
  background: #f0f0f0;
}
.scroll button {
  height: 17px;
  display: grid;
  place-items: center;
  color: #444;
}
.flip {
  transform: rotate(180deg);
}
.track {
  flex: 1;
  padding: 29px 0 14px;
  display: flex;
}
.thumb {
  flex: 1;
  background: #cacaca;
}
.content {
  flex: 1;
  min-width: 0;
  padding: 7px 10px 0;
  overflow: hidden;
}
h3 {
  display: flex;
  align-items: center;
  height: 24px;
  margin: 0;
  font-size: 15px;
  font-weight: 400;
  color: #26344e;
}
h3 svg {
  margin-right: 4px;
  color: #778;
}
h3 i {
  flex: 1;
  height: 1px;
  margin-left: 6px;
  background: #e0e0e0;
}
.tiles {
  display: grid;
  grid-template-columns: repeat(3, 254px);
  padding-left: 13px;
}
.folders {
  padding-top: 6px;
  padding-bottom: 5px;
  row-gap: 8px;
}
.devices {
  padding-top: 6px;
  row-gap: 7px;
}
.tile {
  display: flex;
  align-items: center;
  gap: 5px;
}
.folders .info {
  align-self: flex-start;
  padding-top: 6px;
}
.info {
  display: flex;
  flex-direction: column;
  line-height: 18px;
}
.info b {
  font-weight: 400;
}
.info small {
  font-size: 12px;
  color: #6c6c6c;
}
.bar {
  width: 188px;
  height: 14px;
  margin: 2px 0;
  box-sizing: border-box;
  border: 1px solid #bcbcbc;
  background: #e6e6e6;
}
.bar span {
  display: block;
  height: 100%;
  background: #26a0da;
}
.status {
  display: flex;
  flex: none;
  align-items: center;
  gap: 6px;
  height: 22px;
  box-sizing: border-box;
  padding: 0 10px 5px 14px;
  color: #333f50;
}
.status span {
  margin-right: auto;
}

.taskbar {
  position: absolute;
  left: 0;
  right: 0;
  bottom: -17px;
  height: 36px;
  display: flex;
  align-items: center;
  overflow: hidden;
  background: #203c46;
}
.start {
  padding: 0 16px;
}
.find {
  padding: 0 18px 0 19px;
}
.task {
  display: flex;
  align-items: center;
  gap: 4px;
  width: 160px;
  height: 36px;
  padding-left: 8px;
  box-sizing: border-box;
  white-space: nowrap;
}
.task.active {
  background: #4c626c;
}
.lang {
  margin-right: 5px;
}
.taskbar > svg {
  margin-left: 10px;
}
.taskbar > .y-pen {
  margin-left: 0;
}
.taskbar > .y-pen + svg {
  margin-left: 7px;
}
.taskbar > .y-obs {
  margin-left: 76px;
}
.taskbar > .y-wifi {
  margin: 0 24px 0 12px;
}
</style>
